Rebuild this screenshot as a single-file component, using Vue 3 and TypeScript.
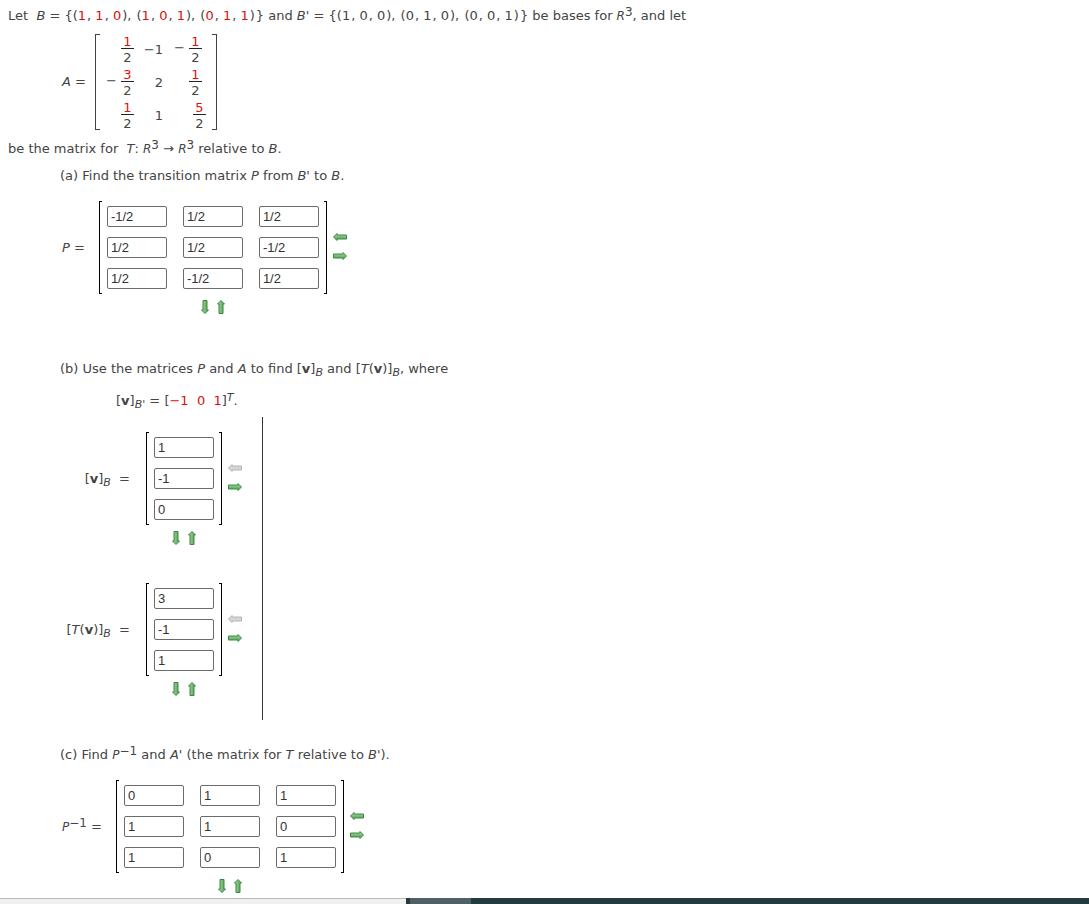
<script setup lang="ts">
import { reactive } from 'vue'

interface Matrix {
  id: string
  name: string
  cells: string[][]
}

interface Part {
  id: string
  matrices: Matrix[]
}

interface Entry {
  sign?: string
  num: string
  den?: string
  pad?: boolean
}

const entries: Entry[] = [
  { num: '1', den: '2' },
  { num: '−1' },
  { sign: '−', num: '1', den: '2', pad: true },
  { sign: '−', num: '3', den: '2' },
  { num: '2' },
  { num: '1', den: '2', pad: true },
  { num: '1', den: '2' },
  { num: '1' },
  { num: '5', den: '2' },
]

const parts = reactive<Part[]>([
  {
    id: 'a',
    matrices: [
      { id: 'p', name: 'P', cells: [['-1/2', '1/2', '1/2'], ['1/2', '1/2', '-1/2'], ['1/2', '-1/2', '1/2']] },
    ],
  },
  {
    id: 'b',
    matrices: [
      { id: 'v', name: 'v relative to B', cells: [['1'], ['-1'], ['0']] },
      { id: 'tv', name: 'T(v) relative to B', cells: [['3'], ['-1'], ['1']] },
    ],
  },
  {
    id: 'c',
    matrices: [
      { id: 'pinv', name: 'P inverse', cells: [['0', '1', '1'], ['1', '1', '0'], ['1', '0', '1']] },
    ],
  },
])

const basisB = [[1, 1, 0], [1, 0, 1], [0, 1, 1]]
const basisBPrime = [[1, 0, 0], [0, 1, 0], [0, 0, 1]]

function addColumn(m: Matrix) {
  m.cells.forEach((row) => row.push(''))
}
function removeColumn(m: Matrix) {
  m.cells.forEach((row) => row.pop())
}
function addRow(m: Matrix) {
  m.cells.push(m.cells[0].map(() => ''))
}
function removeRow(m: Matrix) {
  m.cells.pop()
}
</script>

<template>
  <div class="page">
    <svg class="defs" aria-hidden="true">
      <defs>
        <linearGradient id="green-h" x1="0" y1="0" x2="0" y2="1">
          <stop offset="0" stop-color="#a9d8a2" />
          <stop offset="1" stop-color="#4c9f50" />
        </linearGradient>
        <linearGradient id="green-v" x1="0" y1="0" x2="1" y2="0">
          <stop offset="0" stop-color="#a9d8a2" />
          <stop offset="1" stop-color="#4c9f50" />
        </linearGradient>
      </defs>
    </svg>

    <main class="problem">
      <p class="line">
        Let&nbsp; <i>B</i> = {<span v-for="(v, i) in basisB" :key="i" class="vector">(<template v-for="(x, j) in v" :key="j"><span class="coord n">{{ x }}</span>{{ j < 2 ? ', ' : '' }}</template>){{ i < 2 ? ', ' : '' }}</span>} and <i>B</i>' = {<span v-for="(v, i) in basisBPrime" :key="i" class="vector">(<template v-for="(x, j) in v" :key="j"><span class="coord">{{ x }}</span>{{ j < 2 ? ', ' : '' }}</template>){{ i < 2 ? ', ' : '' }}</span>} be bases for <i class="base">R</i><sup>3</sup>, and let
      </p>

      <div class="given">
        <span><i>A</i> =</span>
        <div class="bracket given-bracket">
          <div v-for="(e, i) in entries" :key="i" class="entry" :class="{ pad: e.pad, whole: !e.den }">
            <span v-if="e.sign" class="sign">{{ e.sign }}</span>
            <span v-if="e.den" class="frac">
              <span class="num">{{ e.num }}</span>
              <span class="den">{{ e.den }}</span>
            </span>
            <span v-else>{{ e.num }}</span>
          </div>
        </div>
      </div>

      <p class="line">
        be the matrix for&nbsp; <i>T</i>: <i class="base">R</i><sup>3</sup> → <i class="base">R</i><sup>3</sup> relative to <i>B</i>.
      </p>

      <section v-for="part in parts" :key="part.id" class="part" :class="'part-' + part.id">
        <p v-if="part.id === 'a'" class="line">
          (a) Find the transition matrix <i>P</i> from <i>B</i>' to <i>B</i>.
        </p>
        <template v-else-if="part.id === 'b'">
          <p class="line">
            (b) Use the matrices <i>P</i> and <i>A</i> to find [<b>v</b>]<sub>B</sub> and [<i>T</i>(<b>v</b>)]<sub>B</sub>, where
          </p>
          <p class="line formula">
            [<b>v</b>]<sub>B'</sub> = [<span class="n">−1</span>&nbsp; <span class="n">0</span>&nbsp; <span class="n">1</span>]<sup class="small">T</sup>.
          </p>
        </template>
        <p v-else class="line">
          (c) Find <i class="base">P</i><sup>−1</sup> and <i>A</i>' (the matrix for <i>T</i> relative to <i>B</i>').
        </p>

        <div class="answers">
          <div v-for="m in part.matrices" :key="m.id" class="answer">
            <span class="label">
              <template v-if="m.id === 'p'"><i>P</i> =</template>
              <template v-else-if="m.id === 'v'">[<b>v</b>]<sub>B</sub>&nbsp; =</template>
              <template v-else-if="m.id === 'tv'">[<i>T</i>(<b>v</b>)]<sub>B</sub>&nbsp; =</template>
              <template v-else><i class="base">P</i><sup>−1</sup> =</template>
            </span>
            <div class="bracket cells">
              <div v-for="(row, r) in m.cells" :key="r" class="row">
                <input
                  v-for="(_, c) in row"
                  :key="c"
                  v-model="row[c]"
                  type="text"
                  :aria-label="`${m.name}, row ${r + 1}, column ${c + 1}`"
                />
              </div>
            </div>
            <div class="columns">
              <button type="button" aria-label="Remove column" :disabled="m.cells[0].length === 1" @click="removeColumn(m)">
                <svg width="14" height="8" viewBox="0 0 14 8"><path class="h" d="M.5 4 4 .5V2H13.5V6H4V7.5Z" /></svg>
              </button>
              <button type="button" aria-label="Add column" @click="addColumn(m)">
                <svg width="14" height="8" viewBox="0 0 14 8"><path class="h" d="M13.5 4 10 .5V2H.5V6H10V7.5Z" /></svg>
              </button>
            </div>
            <div class="rows">
              <button type="button" aria-label="Add row" @click="addRow(m)">
                <svg width="8" height="14" viewBox="0 0 8 14"><path class="v" d="M4 13.5.5 10H2V.5H6V10H7.5Z" /></svg>
              </button>
              <button type="button" aria-label="Remove row" :disabled="m.cells.length === 1" @click="removeRow(m)">
                <svg width="8" height="14" viewBox="0 0 8 14"><path class="v" d="M4 .5.5 4H2V13.5H6V4H7.5Z" /></svg>
              </button>
            </div>
          </div>
        </div>
      </section>
    </main>

    <footer class="strip">
      <div class="strip-light"></div>
      <div class="strip-mid"></div>
      <div class="strip-dark"></div>
    </footer>
  </div>
</template>

<style>
body {
  margin: 0;
  background: #fff;
}
</style>

<style scoped>
.page {
  display: flex;
  flex-direction: column;
  min-height: 100vh;
  color: #444;
  font: 13px/20px Verdana, "DejaVu Sans", sans-serif;
}

.defs {
  position: absolute;
  width: 0;
  height: 0;
}

.problem {
  padding: 6px 8px 5px;
}

.line {
  margin: 0;
}

.n {
  color: #d8100c;
}

.coord,
.vector {
  margin-right: 1px;
}

.base {
  font-size: 12px;
}

sup,
sub {
  line-height: 0;
}

sup {
  font-size: 12px;
  vertical-align: 4px;
}

sup.small {
  font-size: 11px;
  font-style: italic;
}

sub {
  font-size: 11px;
  font-style: italic;
  vertical-align: -3px;
}

/* Square brackets: full-height side bars with short ticks at both ends. */
.bracket {
  --tick: 2px;
  background:
    linear-gradient(currentColor, currentColor) 0 0 / var(--tick) 1px,
    linear-gradient(currentColor, currentColor) 0 100% / var(--tick) 1px,
    linear-gradient(currentColor, currentColor) 100% 0 / var(--tick) 1px,
    linear-gradient(currentColor, currentColor) 100% 100% / var(--tick) 1px;
  background-repeat: no-repeat;
  border: solid currentColor;
  border-width: 0 1px;
}

.given {
  display: flex;
  align-items: center;
  gap: 9px;
  margin: 8px 0 9px 54px;
}

.given-bracket {
  --tick: 4px;
  display: grid;
  grid-template-columns: 36px 34px 38px;
  grid-auto-rows: 33px;
  height: 96px;
  padding-right: 10px;
  padding-left: 2px;
}

.entry {
  display: flex;
  justify-content: flex-end;
  align-items: flex-start;
  line-height: 28px;
}

.entry.pad {
  padding-right: 4px;
}

.entry.whole {
  padding-right: 5px;
  line-height: 32px;
}

.sign {
  margin-right: 4px;
}

.frac {
  display: flex;
  flex-direction: column;
  width: 13px;
  text-align: center;
  line-height: 15px;
}

.num {
  height: 14px;
  border-bottom: 1px solid #222;
  color: #e0120c;
}

.den {
  line-height: 18px;
}

.part {
  margin-left: 52px;
}

.part-a {
  margin-top: 7px;
  margin-bottom: 45px;
}

.part-b {
  margin-bottom: 25px;
}

.formula {
  margin: 12px 0 6px 56px;
}

.answers {
  display: flex;
  flex-direction: column;
  gap: 38px;
  width: fit-content;
  padding-top: 15px;
}

.part-b .answers {
  padding-right: 20px;
  padding-bottom: 24px;
  border-right: 1px solid #333;
}

.answer {
  display: grid;
  grid-template-columns: auto auto auto;
  justify-content: start;
  align-items: center;
  row-gap: 6px;
}

.label {
  padding: 0 14px 0 2px;
  white-space: nowrap;
}

.part-b .label {
  min-width: 68px;
  padding-right: 16px;
  text-align: right;
}

.cells {
  display: flex;
  flex-direction: column;
  gap: 10px;
  padding: 5px 7px;
  border-color: #000;
  color: #000;
}

.row {
  display: flex;
  gap: 16px;
}

input {
  box-sizing: border-box;
  width: 60px;
  height: 21px;
  padding: 1px 3px;
  border: 1px solid #6b6b6b;
  border-radius: 2px;
  background: #fff;
  color: #333;
  font: 13px "Liberation Sans", Arial, sans-serif;
}

.columns {
  display: flex;
  flex-direction: column;
  gap: 11px;
  padding: 0 0 2px 6px;
}

.rows {
  display: flex;
  grid-column: 2;
  justify-content: center;
  gap: 8px;
}

button {
  display: block;
  padding: 0;
  border: 0;
  background: none;
  cursor: pointer;
}

button svg {
  display: block;
}

button path {
  stroke: #3b8741;
  stroke-width: 1;
}

.h {
  fill: url(#green-h);
}

.v {
  fill: url(#green-v);
}

button:disabled {
  cursor: default;
}

button:disabled path {
  fill: #d6d6d6;
  stroke: #b4b4b4;
}

.strip {
  display: flex;
  height: 6px;
  margin-top: auto;
}

.strip-light {
  box-sizing: border-box;
  flex: 406;
  border-top: 1px solid #b8b8b8;
  background: #f1f1f1;
}

.strip-mid {
  box-sizing: border-box;
  flex: 61;
  border-left: 4px solid #233a40;
  background: #4d6166;
}

.strip-dark {
  flex: 618;
  background: #233a40;
}
</style>
